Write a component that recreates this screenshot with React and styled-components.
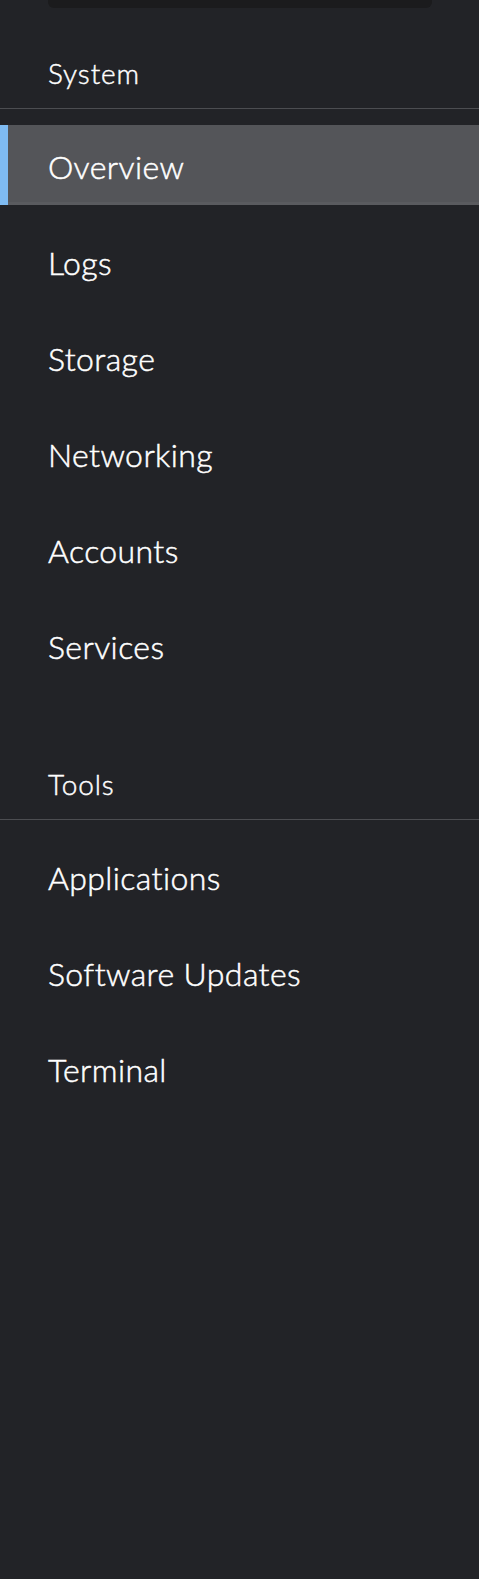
import React from "react";
import styled, { createGlobalStyle } from "styled-components";

const Global = createGlobalStyle`
  html, body {
    margin: 0;
    padding: 0;
    background: #222327;
  }
  body {
    font-family: Lato, "Open Sans", sans-serif;
    -webkit-font-smoothing: antialiased;
  }
`;

const Sidebar = styled.nav`
  width: 479px;
  min-height: 1579px;
  background: #222327;
  color: #ffffff;
  display: flex;
  flex-direction: column;
`;

const SearchBox = styled.div`
  height: 8px;
  margin: 0 47px 0 48px;
  background: #1b1b1d;
  border-radius: 0 0 6px 6px;
`;

const Section = styled.section`
  display: flex;
  flex-direction: column;

  & + & {
    margin-top: 18px;
  }
`;

const SectionTitle = styled.h2`
  margin: 0;
  padding: 44px 48px 14px;
  font-size: 28px;
  line-height: 42px;
  font-weight: 300;
  letter-spacing: 0.9px;
  -webkit-text-stroke: 0.45px #ffffff;
  color: #ffffff;
  border-bottom: 1px solid #4c4d51;
`;

const List = styled.ul`
  list-style: none;
  margin: 0;
  padding: 16px 0;
  display: flex;
  flex-direction: column;
  gap: 16px;
`;

const Item = styled.li`
  position: relative;
  box-sizing: border-box;
  height: 80px;
  padding: 4px 0 0 48px;
  font-size: 32px;
  line-height: 76px;
  font-weight: 300;
  letter-spacing: 0.4px;
  -webkit-text-stroke: 0.5px #ffffff;
  color: #ffffff;
  background: ${(p) => (p.$active ? "#545559" : "transparent")};
  box-shadow: ${(p) => (p.$active ? "inset 0 -3px 0 #5a5b5f" : "none")};

  &::before {
    content: "";
    display: ${(p) => (p.$active ? "block" : "none")};
    position: absolute;
    left: 0;
    top: 0;
    bottom: 0;
    width: 8px;
    background: #7fbbf2;
  }
`;

const sections = [
  {
    title: "System",
    items: ["Overview", "Logs", "Storage", "Networking", "Accounts", "Services"],
  },
  {
    title: "Tools",
    items: ["Applications", "Software Updates", "Terminal"],
  },
];

export default function App() {
  return (
    <>
      <Global />
      <Sidebar>
        <SearchBox />
        {sections.map((s) => (
          <Section key={s.title}>
            <SectionTitle>{s.title}</SectionTitle>
            <List>
              {s.items.map((it) => (
                <Item key={it} $active={it === "Overview"}>
                  {it}
                </Item>
              ))}
            </List>
          </Section>
        ))}
      </Sidebar>
    </>
  );
}
